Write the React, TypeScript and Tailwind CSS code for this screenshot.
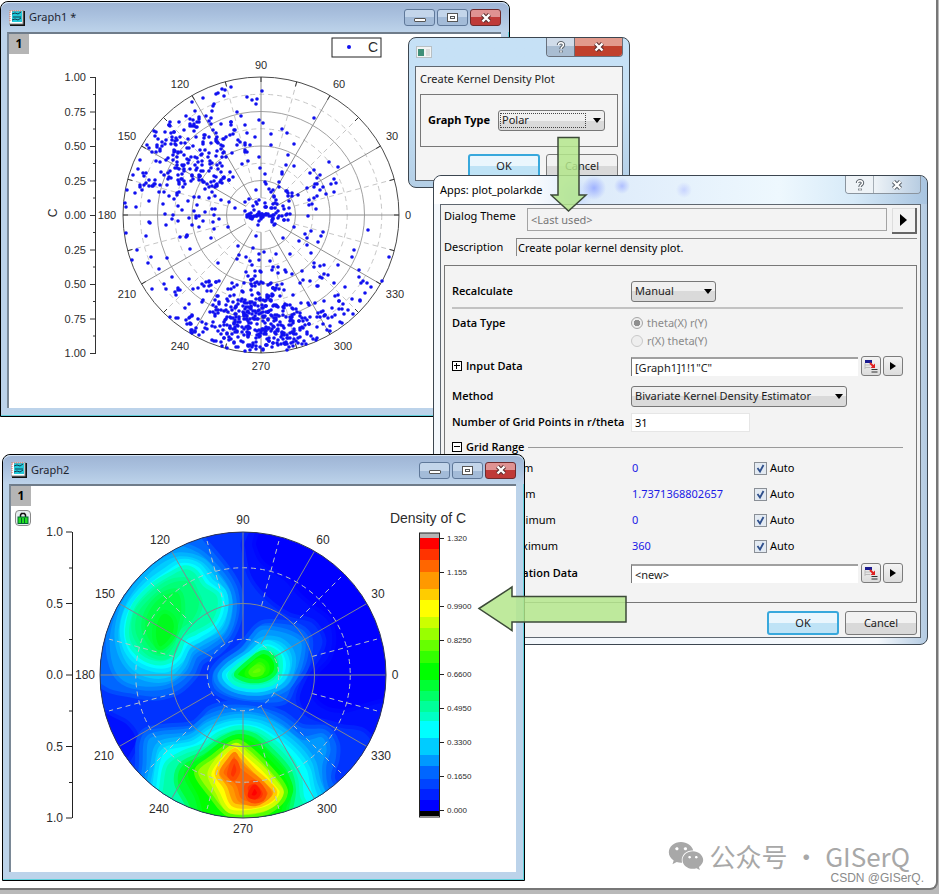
import { useId, type ReactNode } from "react";
import { FaWeixin } from "react-icons/fa";

type Pt = [number, number];
type Contour = { fill: string; edge: string; pts: number[] };

const ARIAL = '"Liberation Sans", Arial, sans-serif';

// closed smooth curve through a flat list of x, y values
function smoothPath(flat: number[]) {
  const p: Pt[] = [];
  for (let i = 0; i < flat.length; i += 2) p.push([flat[i], flat[i + 1]]);
  const n = p.length;
  let d = `M${p[0][0]} ${p[0][1]}`;
  for (let i = 0; i < n; i++) {
    const a = p[(i - 1 + n) % n];
    const b = p[i];
    const c = p[(i + 1) % n];
    const e = p[(i + 2) % n];
    d += `C${b[0] + (c[0] - a[0]) / 6} ${b[1] + (c[1] - a[1]) / 6} ${c[0] - (e[0] - b[0]) / 6} ${c[1] - (e[1] - b[1]) / 6} ${c[0]} ${c[1]}`;
  }
  return d + "Z";
}

function polar(cx: number, cy: number, r: number, deg: number): Pt {
  const a = (deg * Math.PI) / 180;
  return [cx + r * Math.cos(a), cy - r * Math.sin(a)];
}

// contours live in a space three times the size of the plot, lowest level first
const contours: Contour[] = [
  { fill: "#0010ff", edge: "#0008ff", pts: [442, -40, 475, 60, 500, 110, 570, 160, 610, 205, 650, 240, 700, 280, 715, 340, 700, 400, 665, 440, 650, 500, 680, 540, 740, 555, 920, 550, 900, 940, -40, 940, -40, -40] },
  { fill: "#0033ff", edge: "#0022ff", pts: [420, -40, 440, 60, 460, 150, 510, 215, 580, 265, 650, 285, 685, 340, 670, 390, 630, 450, 605, 520, 640, 570, 730, 598, 830, 640, 920, 900, -40, 940, 50, 780, 105, 690, 125, 640, 95, 590, 40, 560, -40, 500, -60, -60] },
  { fill: "#0066ff", edge: "#004cff", pts: [250, -40, 330, 45, 400, 130, 432, 190, 436, 260, 412, 330, 370, 380, 320, 410, 300, 450, 250, 498, 180, 518, 100, 508, 30, 490, -30, 430, -60, 300, -60, -60] },
  { fill: "#0066ff", edge: "#004cff", pts: [480, 300, 520, 285, 600, 295, 640, 325, 645, 370, 630, 430, 595, 480, 565, 530, 480, 535, 400, 520, 350, 490, 345, 440, 375, 400, 430, 360] },
  { fill: "#0066ff", edge: "#004cff", pts: [80, 920, 120, 740, 125, 650, 150, 610, 220, 598, 290, 590, 340, 545, 400, 530, 480, 535, 560, 560, 620, 600, 690, 605, 725, 650, 725, 700, 712, 760, 760, 830, 780, 940] },
  { fill: "#0099ff", edge: "#0080ff", pts: [225, 50, 310, 75, 370, 132, 408, 190, 416, 255, 393, 325, 340, 368, 300, 390, 275, 440, 220, 480, 150, 488, 80, 470, 45, 420, 36, 330, 60, 240, 105, 150, 165, 85] },
  { fill: "#0099ff", edge: "#0080ff", pts: [500, 305, 570, 315, 620, 345, 618, 400, 600, 450, 570, 490, 500, 515, 430, 510, 375, 485, 358, 445, 390, 405, 440, 370, 470, 330] },
  { fill: "#0099ff", edge: "#0080ff", pts: [110, 930, 132, 800, 145, 720, 152, 640, 200, 620, 280, 612, 330, 575, 400, 553, 490, 556, 560, 590, 620, 636, 680, 628, 698, 670, 685, 720, 690, 780, 730, 860, 760, 940] },
  { fill: "#00ccff", edge: "#00b3ff", pts: [250, 85, 320, 102, 365, 152, 398, 200, 402, 255, 380, 315, 320, 352, 285, 375, 264, 420, 225, 458, 160, 462, 105, 435, 70, 380, 62, 310, 85, 230, 130, 165, 190, 110] },
  { fill: "#00ccff", edge: "#00b3ff", pts: [510, 335, 560, 345, 592, 385, 588, 440, 560, 480, 500, 502, 430, 498, 385, 475, 372, 445, 400, 412, 450, 380, 480, 350] },
  { fill: "#00ccff", edge: "#00b3ff", pts: [130, 930, 152, 800, 168, 720, 190, 652, 280, 632, 340, 592, 420, 570, 500, 578, 560, 610, 620, 660, 655, 710, 670, 770, 710, 860, 740, 940] },
  { fill: "#00ffff", edge: "#00e6ff", pts: [255, 105, 310, 118, 345, 163, 385, 197, 390, 250, 365, 305, 315, 340, 280, 360, 255, 405, 215, 432, 165, 430, 115, 405, 85, 360, 78, 300, 100, 235, 150, 175, 210, 130] },
  { fill: "#00ffff", edge: "#00e6ff", pts: [515, 348, 555, 368, 575, 405, 570, 445, 545, 475, 490, 493, 430, 488, 395, 468, 385, 442, 415, 415, 465, 380, 490, 358] },
  { fill: "#00ffff", edge: "#00e6ff", pts: [150, 930, 172, 800, 186, 710, 210, 668, 290, 650, 350, 610, 420, 589, 490, 597, 550, 632, 605, 680, 638, 730, 652, 790, 680, 860, 710, 940] },
  { fill: "#00ffaa", edge: "#00ffcc", pts: [265, 124, 300, 137, 325, 175, 366, 205, 370, 245, 350, 290, 300, 320, 265, 340, 245, 385, 210, 410, 165, 408, 125, 385, 97, 345, 95, 295, 115, 235, 165, 180, 220, 145] },
  { fill: "#00ffaa", edge: "#00ffcc", pts: [510, 366, 548, 385, 555, 420, 547, 455, 520, 476, 470, 483, 420, 473, 400, 447, 425, 420, 470, 390] },
  { fill: "#00ffaa", edge: "#00ffcc", pts: [180, 930, 195, 790, 210, 715, 260, 680, 320, 658, 370, 622, 430, 604, 490, 615, 545, 655, 590, 705, 612, 755, 618, 810, 640, 930] },
  { fill: "#00ff77", edge: "#00ff90", pts: [235, 162, 280, 162, 303, 200, 315, 235, 294, 285, 255, 318, 240, 362, 210, 394, 170, 390, 132, 357, 112, 310, 122, 255, 162, 208, 200, 178] },
  { fill: "#00ff44", edge: "#00ff5c", pts: [205, 202, 250, 197, 262, 250, 250, 305, 225, 350, 190, 378, 152, 340, 142, 290, 162, 240] },
  { fill: "#00ff33", edge: "#00ff66", pts: [240, 770, 255, 715, 320, 680, 380, 636, 430, 618, 480, 630, 530, 675, 578, 730, 594, 790, 585, 850, 570, 930, 330, 930, 270, 830] },
  { fill: "#00fb1e", edge: "#00ff33", pts: [205, 257, 233, 275, 238, 315, 215, 353, 188, 366, 174, 330, 182, 280] },
  { fill: "#00ff00", edge: "#00ff44", pts: [505, 378, 532, 395, 540, 430, 520, 455, 475, 466, 430, 455, 422, 440, 460, 405, 485, 385] },
  { fill: "#00ff00", edge: "#00ff18", pts: [270, 740, 330, 692, 385, 647, 430, 630, 475, 645, 520, 690, 568, 745, 586, 790, 568, 835, 530, 900, 350, 910, 300, 810] },
  { fill: "#33ff00", edge: "#18ff00", pts: [490, 402, 512, 415, 512, 440, 480, 454, 452, 445, 465, 420] },
  { fill: "#66ff00", edge: "#4cff00", pts: [485, 421, 499, 428, 495, 442, 472, 447, 464, 436] },
  { fill: "#99ff00", edge: "#55ff00", pts: [300, 738, 350, 692, 395, 658, 427, 646, 465, 670, 512, 715, 555, 765, 570, 800, 545, 840, 490, 868, 400, 868, 345, 810] },
  { fill: "#ffff00", edge: "#ccff00", pts: [340, 745, 365, 700, 400, 667, 423, 657, 452, 685, 500, 727, 542, 775, 557, 800, 533, 835, 480, 855, 400, 855, 365, 800] },
  { fill: "#ff9900", edge: "#ffcc00", pts: [362, 742, 390, 695, 417, 672, 435, 690, 472, 730, 518, 772, 538, 800, 515, 828, 465, 842, 410, 835, 388, 785] },
  { fill: "#ff6600", edge: "#ff8000", pts: [377, 742, 400, 702, 417, 684, 434, 718, 480, 755, 512, 785, 520, 808, 480, 834, 432, 822, 415, 780] },
  { fill: "#ff3300", edge: "#ff4c00", pts: [414, 704, 427, 732, 414, 758, 399, 745] },
  { fill: "#ff3300", edge: "#ff4c00", pts: [450, 782, 480, 768, 506, 800, 494, 823, 462, 822] },
  { fill: "#ff0000", edge: "#ff1800", pts: [475, 782, 489, 800, 478, 814, 461, 808] },
];

const spokes = [0, 30, 60, 90, 120, 150, 180, 210, 240, 270, 300, 330];

function makePoints(cx: number, cy: number, radius: number) {
  let seed = 20231;
  const rnd = () => {
    seed = (seed * 1664525 + 1013904223) % 4294967296;
    return seed / 4294967296;
  };
  const gauss = () => Math.sqrt(-2 * Math.log(rnd() + 1e-9)) * Math.cos(2 * Math.PI * rnd());
  // offset from the pole, spread, count
  const clusters = [
    [-74, -60, 30, 30, 170],
    [-84, -24, 34, 24, 80],
    [-44, -76, 30, 26, 60],
    [2, 108, 42, 26, 250],
    [0, 96, 13, 28, 110],
    [38, 112, 32, 20, 80],
    [-45, 108, 28, 22, 70],
    [-4, 0, 7, 2, 32],
    [16, -6, 9, 11, 45],
    [36, -26, 22, 18, 36],
    [75, 75, 24, 16, 14],
    [-70, 40, 36, 22, 26],
    [40, 25, 28, 20, 20],
  ];
  const out: Pt[] = [];
  for (const [dx, dy, sx, sy, count] of clusters) {
    let left = count;
    while (left > 0) {
      const x = dx + gauss() * sx;
      const y = dy + gauss() * sy;
      if (Math.hypot(x, y) < radius) {
        out.push([Math.round(cx + x), Math.round(cy + y)]);
        left--;
      }
    }
  }
  return out;
}

const scatter: Pt[] = [
  ...makePoints(261, 215, 137),
  [262, 91], [314, 118], [287, 133], [294, 144], [263, 123], [329, 162], [271, 145], [231, 87], [222, 89], [216, 94],
  [203, 98], [368, 230], [389, 257], [352, 257], [382, 281], [363, 281], [371, 287], [132, 260], [137, 250], [311, 253],
];

function AxisLabel({ x, y, size = 12, children, anchor = "middle" }: { x: number; y: number; size?: number; children: ReactNode; anchor?: "start" | "middle" | "end" }) {
  return (
    <text x={x} y={y} fontSize={size} textAnchor={anchor} fontFamily={ARIAL} fill="#2c2c2c">
      {children}
    </text>
  );
}

function ScatterChart() {
  const cx = 261;
  const cy = 215;
  const R = 138;
  return (
    <svg className="block h-[373px] w-full" viewBox="9 34 492 373" preserveAspectRatio="xMinYMin meet">
      <rect x="332" y="38" width="49" height="19" fill="#fff" stroke="#222" />
      <circle cx="349" cy="47" r="2" fill="#1010f0" />
      <AxisLabel x={373} y={52} size={14}>C</AxisLabel>
      <g fill="none" stroke="#c6c6c6" strokeDasharray="5 4">
        {[0.125, 0.375, 0.625, 0.875].map((f) => (
          <circle key={f} cx={cx} cy={cy} r={R * f} />
        ))}
        {spokes.map((s) => {
          const [x1, y1] = polar(cx, cy, R * 0.25, s + 15);
          const [x2, y2] = polar(cx, cy, R, s + 15);
          return <line key={s} x1={x1} y1={y1} x2={x2} y2={y2} />;
        })}
      </g>
      <g fill="none" stroke="#8e8e8e">
        {[0.25, 0.5, 0.75].map((f) => (
          <circle key={f} cx={cx} cy={cy} r={R * f} stroke="#a0a0a0" />
        ))}
        {spokes.map((s) => {
          const [x1, y1] = polar(cx, cy, R * 0.125, s);
          const [x2, y2] = polar(cx, cy, R, s);
          return <line key={s} x1={x1} y1={y1} x2={x2} y2={y2} />;
        })}
        <circle cx={cx} cy={cy} r={R} stroke="#4a4a4a" />
      </g>
      <g stroke="#333">
        {[...spokes, ...spokes.map((s) => s + 15)].map((s) => {
          const [x1, y1] = polar(cx, cy, R - 5, s);
          const [x2, y2] = polar(cx, cy, R, s);
          return <line key={s} x1={x1} y1={y1} x2={x2} y2={y2} />;
        })}
      </g>
      <g fill="#1010f0">
        {scatter.map(([x, y], i) => (
          <circle key={i} cx={x} cy={y} r="1.8" />
        ))}
      </g>
      <path d="M95.5 77V354" stroke="#333" />
      {["1.00", "0.75", "0.50", "0.25", "0.00", "0.25", "0.50", "0.75", "1.00"].map((t, i) => (
        <g key={i}>
          <path d={`M90 ${77.5 + i * 34.5}h5`} stroke="#333" />
          {i < 8 && <path d={`M93 ${94.5 + i * 34.5}h2`} stroke="#333" />}
          <AxisLabel x={86} y={81 + i * 34.5} size={11} anchor="end">{t}</AxisLabel>
        </g>
      ))}
      <text x="57" y="213" fontSize="12" fontFamily={ARIAL} fill="#2c2c2c" textAnchor="middle" transform="rotate(-90 57 213)">C</text>
      <g>
        <AxisLabel x={261} y={69} size={11}>90</AxisLabel>
        <AxisLabel x={180} y={88} size={11}>120</AxisLabel>
        <AxisLabel x={339} y={88} size={11}>60</AxisLabel>
        <AxisLabel x={127} y={140} size={11}>150</AxisLabel>
        <AxisLabel x={392} y={140} size={11}>30</AxisLabel>
        <AxisLabel x={107} y={219} size={11}>180</AxisLabel>
        <AxisLabel x={408} y={219} size={11}>0</AxisLabel>
        <AxisLabel x={127} y={298} size={11}>210</AxisLabel>
        <AxisLabel x={395} y={298} size={11}>330</AxisLabel>
        <AxisLabel x={180} y={350} size={11}>240</AxisLabel>
        <AxisLabel x={343} y={350} size={11}>300</AxisLabel>
        <AxisLabel x={261} y={370} size={11}>270</AxisLabel>
      </g>
    </svg>
  );
}

// colour key bands, top to bottom: colour and height
const bands: [string, number][] = [
  ["#ff0000", 11], ["#ff3300", 11], ["#ff6600", 12], ["#ff9900", 17], ["#ffcc00", 11], ["#ffff00", 17],
  ["#ccff00", 11], ["#99ff00", 12], ["#66ff00", 11], ["#33ff00", 12], ["#00ff00", 17], ["#00ff33", 11],
  ["#00ff66", 10], ["#00ff99", 11], ["#00ffc4", 9], ["#00ffff", 17], ["#00ccff", 17], ["#0099ff", 11],
  ["#0066ff", 13], ["#0044ff", 10], ["#0022ff", 11], ["#0000ff", 11],
];

function ColorKey() {
  let y = 538;
  return (
    <g>
      <rect x="420" y="533" width="20" height="6" fill="#b4b4b4" />
      {bands.map(([c, h]) => {
        const top = y;
        y += h;
        return <rect key={c} x="420" y={top} width="20" height={h} fill={c} shapeRendering="crispEdges" />;
      })}
      <rect x="420" y="811" width="20" height="5" fill="#000" />
      <rect x="419.5" y="533" width="20" height="284" fill="none" stroke="#222" />
      {["1.320", "1.155", "0.9900", "0.8250", "0.6600", "0.4950", "0.3300", "0.1650", "0.000"].map((t, i) => (
        <g key={t}>
          <path d={`M440 ${538.5 + i * 34}h4`} stroke="#222" />
          <AxisLabel x={447} y={541 + i * 34} size={8} anchor="start">{t}</AxisLabel>
        </g>
      ))}
    </g>
  );
}

function DensityChart() {
  const clip = useId();
  const cx = 243;
  const cy = 675;
  const R = 143;
  return (
    <svg className="block h-[386px] w-full" viewBox="11 486 505 386" preserveAspectRatio="xMinYMin meet">
      <defs>
        <clipPath id={clip}>
          <circle cx={cx} cy={cy} r={R} />
        </clipPath>
      </defs>
      <g clipPath={`url(#${clip})`}>
        <rect x="100" y="531" width="288" height="288" fill="#0000ff" />
        <g transform="translate(96 526) scale(0.3333)">
          {contours.map((c, i) => (
            <path key={i} d={smoothPath(c.pts)} fill={c.fill} stroke={c.edge} strokeWidth={12} />
          ))}
        </g>
      </g>
      <g fill="none" stroke="#b9c3c9" strokeDasharray="5 4">
        {[0.25, 0.75].map((f) => (
          <circle key={f} cx={cx} cy={cy} r={R * f} />
        ))}
        {spokes.map((s) => {
          const [x1, y1] = polar(cx, cy, R * 0.5, s + 15);
          const [x2, y2] = polar(cx, cy, R * 0.97, s + 15);
          return <line key={s} x1={x1} y1={y1} x2={x2} y2={y2} />;
        })}
      </g>
      <g fill="none" stroke="#808890">
        <circle cx={cx} cy={cy} r={R * 0.5} />
        {spokes.map((s) => {
          const [x1, y1] = polar(cx, cy, R * 0.25, s);
          const [x2, y2] = polar(cx, cy, R, s);
          return <line key={s} x1={x1} y1={y1} x2={x2} y2={y2} />;
        })}
        <circle cx={cx} cy={cy} r={R} stroke="#303850" />
      </g>
      <path d="M72.5 532V818" stroke="#222" />
      {["1.0", "0.5", "0.0", "0.5", "1.0"].map((t, i) => (
        <g key={i}>
          <path d={`M66 ${532 + i * 71.5}h6`} stroke="#222" />
          {i < 4 && <path d={`M69 ${568 + i * 71.5}h3`} stroke="#222" />}
          <AxisLabel x={63} y={536 + i * 71.5} anchor="end">{t}</AxisLabel>
        </g>
      ))}
      <AxisLabel x={243} y={524}>90</AxisLabel>
      <AxisLabel x={160} y={544}>120</AxisLabel>
      <AxisLabel x={323} y={544}>60</AxisLabel>
      <AxisLabel x={105} y={598}>150</AxisLabel>
      <AxisLabel x={378} y={598}>30</AxisLabel>
      <AxisLabel x={85} y={679}>180</AxisLabel>
      <AxisLabel x={395} y={679}>0</AxisLabel>
      <AxisLabel x={104} y={760}>210</AxisLabel>
      <AxisLabel x={381} y={760}>330</AxisLabel>
      <AxisLabel x={159} y={813}>240</AxisLabel>
      <AxisLabel x={327} y={813}>300</AxisLabel>
      <AxisLabel x={243} y={833}>270</AxisLabel>
      <AxisLabel x={428} y={523} size={14}>Density of C</AxisLabel>
      <ColorKey />
    </svg>
  );
}

function GraphIcon() {
  return (
    <svg className="h-4 w-4" viewBox="0 0 16 16" aria-hidden="true">
      <rect x="1" y="1" width="15" height="15" fill="#111" />
      <rect x="0" y="0" width="14" height="14" fill="#fff" stroke="#888" />
      <rect x="3" y="1" width="10" height="11" fill="#22c8d8" />
      <path d="M3 4l3-1 3 1 3-2M3 10l3-1 3 1 3-2M4 7h8" stroke="#123c50" fill="none" />
      <path d="M1 1h12M1 2v10" stroke="#d66" strokeDasharray="1 1" />
    </svg>
  );
}

function CloseGlyph({ gray = false }: { gray?: boolean }) {
  return (
    <svg className="h-3 w-3" viewBox="0 0 12 12" aria-hidden="true">
      <path d="M2.5 2.5l7 7M9.5 2.5l-7 7" stroke={gray ? "#5c646c" : "#5a3030"} strokeWidth="4.4" />
      <path d="M2.5 2.5l7 7M9.5 2.5l-7 7" stroke="#fff" strokeWidth="2.4" />
    </svg>
  );
}

function HelpGlyph() {
  return (
    <svg className="h-3 w-3" viewBox="0 0 12 12" fill="none" aria-hidden="true">
      <path d="M3.5 4c0-3 5-3 5 0 0 2-2.5 1.5-2.5 4M6 9.5v2" stroke="#5c646c" strokeWidth="3.4" />
      <path d="M3.5 4c0-3 5-3 5 0 0 2-2.5 1.5-2.5 4M6 9.5v2" stroke="#fff" strokeWidth="1.4" />
    </svg>
  );
}

function GraphWindow({ title, className, children, locked }: { title: string; className: string; children: ReactNode; locked?: boolean }) {
  const btn = "flex h-[17px] w-[31px] items-center justify-center rounded-[3px] border border-[#5f7899] bg-linear-to-b from-[#c3d5ea] from-50% to-[#a3bbd8] to-50%";
  return (
    <section className={`absolute flex flex-col rounded-t-lg border border-black bg-[#bcd3ea] pr-2 pb-2 pl-1.5 shadow-[inset_-1px_-1px_0_#5fd0dc] ${className}`}>
      <header className="-mr-2 -ml-1.5 flex h-[30px] items-center gap-1 rounded-t-lg border-t border-[#d5e4f4] bg-linear-to-b from-[#9fb5d5] via-[#a9c0de] via-40% to-[#bdd3ea] pr-2 pl-2">
        <GraphIcon />
        <h2 className="flex-1 text-[11px] text-[#1d2530]">{title}</h2>
        <div className="flex gap-0.5">
          <button className={btn} aria-label="Minimize">
            <span className="mt-1 h-1 w-3 rounded-[1px] border border-[#555] bg-white" />
          </button>
          <button className={btn} aria-label="Maximize">
            <span className="flex h-[9px] w-[11px] items-center justify-center border border-[#555] bg-white">
              <span className="h-[3px] w-[5px] border border-[#555]" />
            </span>
          </button>
          <button className="flex h-[17px] w-[31px] items-center justify-center rounded-[3px] border border-[#6f2a2c] bg-linear-to-b from-[#df9292] from-45% to-[#bf3a38] to-45%" aria-label="Close">
            <CloseGlyph />
          </button>
        </div>
      </header>
      <div className="relative flex-1 border-t-2 border-l-2 border-t-[#6f7c8a] border-l-[#7a8896] bg-white">
        {children}
        <span className="absolute top-0 left-0 flex h-5 w-5 items-center justify-center bg-[#b5b5b5] text-xs font-bold text-black">1</span>
        {locked && (
          <span className="absolute top-6 left-1 flex h-4 w-4 items-center justify-center rounded border border-[#888] bg-[#e6eef0]">
            <svg className="h-3 w-3" viewBox="0 0 12 12" aria-label="Locked">
              <path d="M3.5 5V3l1-1.5h3l1 1.5v2" fill="none" stroke="#111" strokeWidth="1.5" />
              <rect x="1" y="5" width="10" height="6.5" fill="#22dd22" stroke="#063" />
              <path d="M4.5 6v5M7.5 6v5" stroke="#063" />
            </svg>
          </span>
        )}
      </div>
    </section>
  );
}

function PushButton({ primary = false, children }: { primary?: boolean; children: ReactNode }) {
  return (
    <button
      className={`h-6 w-[72px] rounded-[3px] text-[11px] text-[#1c1c1c] ${
        primary
          ? "border-2 border-[#38a8dc] bg-linear-to-b from-[#eaf6fd] from-50% to-[#bfe3f6] to-50%"
          : "border border-[#7a7a7a] bg-linear-to-b from-[#f2f2f2] from-50% to-[#d9d9d9] to-50%"
      }`}
    >
      {children}
    </button>
  );
}

function DropDown({ id, value, className, focused }: { id: string; value: string; className: string; focused?: boolean }) {
  return (
    <div className={`relative h-[21px] ${className}`}>
      <select id={id} className="block h-full w-full appearance-none rounded-[3px] border border-[#777] bg-linear-to-b from-[#f0f0f0] from-50% to-[#dadada] to-50% pl-[3px] text-[11px] text-[#1c1c1c]">
        <option>{value}</option>
      </select>
      {focused && <span className="pointer-events-none absolute inset-y-[3px] right-[19px] left-[2px] border border-dotted border-[#444]" />}
      <svg className="pointer-events-none absolute top-2 right-1 h-[5px] w-2" viewBox="0 0 8 5" aria-hidden="true">
        <path d="M0 0h8L4 5z" fill="#000" />
      </svg>
    </div>
  );
}

function PlayGlyph({ big = false }: { big?: boolean }) {
  return (
    <svg className={big ? "h-3 w-[7px]" : "h-2 w-[6px]"} viewBox="0 0 6 10" preserveAspectRatio="none" aria-hidden="true">
      <path d="M0 0l6 5-6 5z" fill="#000" />
    </svg>
  );
}

function DataField({ id, value }: { id: string; value: string }) {
  const btn = "flex h-5 w-5 items-center justify-center rounded-[3px] border border-[#7c7c7c] bg-linear-to-b from-[#f4f4f4] to-[#dcdcdc]";
  return (
    <div className="flex flex-1 items-center gap-0.5">
      <input id={id} defaultValue={value} className="mr-px h-[19px] min-w-0 flex-1 border-t-2 border-l border-t-[#a0a0a0] border-l-[#777] bg-white px-[3px] text-[11px] text-[#222]" />
      <button className={btn} aria-label="Select data">
        <svg className="h-[14px] w-[14px]" viewBox="0 0 14 14" aria-hidden="true">
          <path d="M1 1h7v3H1z" fill="#1a1a90" />
          <path d="M1 6h5M1 8.5h5M1 4v6" stroke="#bbb" fill="none" />
          <path d="M6 4l4 4" stroke="#e02020" strokeWidth="2" />
          <path d="M11 4.500V9H6.500z" fill="#e02020" />
          <path d="M7.500 10.500h6M7.500 13h6" stroke="#333" strokeWidth="1.200" />
        </svg>
      </button>
      <button className={btn} aria-label="More options">
        <PlayGlyph />
      </button>
    </div>
  );
}

function TreeToggle({ open = false }: { open?: boolean }) {
  return (
    <button className="relative mr-1 h-[10px] w-[10px] shrink-0 border border-black bg-white" aria-label={open ? "Collapse" : "Expand"}>
      <span className="absolute top-[3px] left-[1px] h-px w-[6px] bg-black" />
      {!open && <span className="absolute top-[1px] left-[3px] h-[6px] w-px bg-black" />}
    </button>
  );
}

function RangeRow({ id, label, value }: { id: string; label: string; value: string }) {
  return (
    <div className="flex h-[26px] items-center">
      <span className="w-[180px] pl-6 text-[11px]">{label}</span>
      <span className="w-[122px] text-[11px] text-[#1a1ae6]">{value}</span>
      <span className="relative h-[13px] w-[13px]">
        <input type="checkbox" id={id} defaultChecked className="block h-[13px] w-[13px] appearance-none border border-[#8a8f96] bg-[#e3eaf2]" />
        <svg className="pointer-events-none absolute inset-0 h-[13px] w-[13px]" viewBox="0 0 13 13" fill="none" aria-hidden="true">
          <path d="M3.5 6l2.5 3.5L9.5 3" stroke="#2f4f8c" strokeWidth="1.8" />
        </svg>
      </span>
      <label htmlFor={id} className="pl-[3px] text-[11px]">Auto</label>
    </div>
  );
}

const labelCol = "flex w-[179px] shrink-0 items-center font-['Open_Sans','Noto_Sans',sans-serif] text-[11px] font-semibold whitespace-nowrap";

function KernelDialog() {
  return (
    <section className="absolute top-[37px] left-[408px] flex h-[151px] w-[222px] flex-col rounded-lg border border-[#3c4650] bg-linear-to-b from-[#c6e1f6] from-40% to-[#b4cfe6] px-1.5 pb-1.5">
      <header className="flex h-7 items-start justify-between">
        <svg className="mt-2 ml-px h-3 w-4" viewBox="0 0 16 12" aria-hidden="true">
          <rect x="0.5" y="0.5" width="15" height="11" fill="#f2f4f4" stroke="#b8c0c4" />
          <rect x="2" y="3" width="6" height="7" fill="#3f8f78" />
          <rect x="10" y="3" width="4" height="7" fill="#ddd" />
        </svg>
        <div className="flex h-[19px] overflow-hidden rounded-b border border-t-0 border-[#68707c]">
          <button className="flex w-7 items-center justify-center border-r border-[#68707c] bg-linear-to-b from-[#d0dcea] from-45% to-[#a9bdd2] to-45%" aria-label="Help">
            <HelpGlyph />
          </button>
          <button className="flex w-[47px] items-center justify-center bg-linear-to-b from-[#e29a8c] from-45% to-[#c0402c] to-45%" aria-label="Close">
            <CloseGlyph />
          </button>
        </div>
      </header>
      <div className="flex flex-1 flex-col border border-[#5f6770] bg-[#f4f4f4] px-1 pt-1">
        <p className="text-[11px] leading-4 text-[#222]">Create Kernel Density Plot</p>
        <div className="mt-[7px] flex h-[53px] items-center border border-[#777] pl-[7px]">
          <label htmlFor="graph-type" className="w-[70px] text-[11px] font-bold text-black">Graph Type</label>
          <DropDown id="graph-type" value="Polar" className="w-[107px]" focused />
        </div>
        <div className="mt-[7px] flex justify-end gap-1.5">
          <PushButton primary>OK</PushButton>
          <PushButton>Cancel</PushButton>
        </div>
      </div>
    </section>
  );
}

function PolarKdeDialog() {
  return (
    <section className="absolute top-[175px] left-[433px] flex w-[495px] flex-col rounded-lg border border-[#3c4650] bg-linear-to-r from-[#f4f8fc] from-90% to-[#b4cbe2] px-1.5 pb-1.5 text-black">
      <header className="-mx-1.5 flex h-7 items-start justify-between rounded-t-lg bg-[radial-gradient(circle_at_160px_12px,#9fb2ff_0,transparent_12px),radial-gradient(circle_at_188px_10px,#b0c0ff_0,transparent_8px),radial-gradient(circle_at_250px_14px,#c8d4ff_0,transparent_8px),radial-gradient(circle_at_140px_20px,#c4d8ff_0,transparent_18px),linear-gradient(to_right,#fff_0%,#fff_18%,#dceafa_30%,#eef8fe_70%,#d7eaf8_85%,#a8c4e0_100%)] pr-1.5 pl-1.5">
        <h2 className="pt-1.5 text-[11px] leading-4">Apps: plot_polarkde</h2>
        <div className="flex h-[18px] overflow-hidden rounded-b border border-t-0 border-[#8a949e]">
          <button className="flex w-7 items-center justify-center border-r border-[#a5aeb6] bg-[#eef3f7]" aria-label="Help">
            <HelpGlyph />
          </button>
          <button className="flex w-[46px] items-center justify-center bg-linear-to-r from-[#eef3f7] to-[#b8cde2]" aria-label="Close">
            <CloseGlyph gray />
          </button>
        </div>
      </header>
      <div className="border border-[#5f6770] bg-[#f3f3f3] px-[3px] pt-[3px] pb-0.5">
        <div className="flex items-start">
          <label htmlFor="theme" className="w-[83px] text-[11px] leading-4">Dialog Theme</label>
          <input id="theme" defaultValue="<Last used>" className="h-[23px] min-w-0 flex-1 border border-[#a3a3a3] bg-[#f3f3f3] px-[3px] text-[11px] text-[#777]" />
          <button className="ml-[5px] flex h-[26px] w-[25px] items-center justify-center border-r-2 border-b-2 border-[#666] bg-[#f3f3f3] shadow-[inset_1px_1px_0_#ddd]" aria-label="Theme menu">
            <PlayGlyph big />
          </button>
        </div>
        <div className="mt-1 flex h-[18px] items-center">
          <label htmlFor="description" className="w-[72px] text-[11px]">Description</label>
          <input id="description" readOnly defaultValue="Create polar kernel density plot." className="h-[18px] min-w-0 flex-1 border-t border-l border-[#888] bg-[#f3f3f3] pl-px text-[11px]" />
        </div>
        <div className="mt-[9px] border border-[#777] px-[7px] pt-[9px] pb-[17px]">
          <div className="mr-1.5 flex h-[34px] items-center border-b-2 border-[#c2c2c2]">
            <label htmlFor="recalculate" className={labelCol}>Recalculate</label>
            <DropDown id="recalculate" value="Manual" className="w-[85px]" />
          </div>
          <div role="radiogroup" aria-labelledby="data-type-label" className="flex pt-[5px]">
            <span id="data-type-label" className={`${labelCol} h-[18px]`}>Data Type</span>
            <div className="text-[11px] text-[#8a8a8a]">
              <div className="flex h-[18px] items-center gap-1">
                <input type="radio" id="theta-first" name="data-type" defaultChecked disabled className="h-3 w-3 appearance-none rounded-full border border-[#a5a5a5] bg-[radial-gradient(circle,#8f8f8f_0,#8f8f8f_3px,#eee_3px)]" />
                <label htmlFor="theta-first">theta(X) r(Y)</label>
              </div>
              <div className="flex h-[18px] items-center gap-1">
                <input type="radio" id="r-first" name="data-type" disabled className="h-3 w-3 appearance-none rounded-full border border-[#c9c9c9] bg-[#eee]" />
                <label htmlFor="r-first">r(X) theta(Y)</label>
              </div>
            </div>
          </div>
          <div className="mt-1 mr-1.5 flex h-6 items-center">
            <div className={labelCol}>
              <TreeToggle />
              <label htmlFor="input-data">Input Data</label>
            </div>
            <DataField id="input-data" value={'[Graph1]1!1"C"'} />
          </div>
          <div className="mt-1.5 flex h-6 items-center">
            <label htmlFor="method" className={labelCol}>Method</label>
            <DropDown id="method" value="Bivariate Kernel Density Estimator" className="w-[216px]" />
          </div>
          <div className="mt-1 flex h-[21px] items-center">
            <label htmlFor="grid-points" className={labelCol}>Number of Grid Points in r/theta</label>
            <input id="grid-points" defaultValue="31" className="h-[19px] w-[119px] border border-[#e6e6e6] bg-white px-[3px] text-[11px]" />
          </div>
          <div className="mt-1.5 mr-1.5 flex h-4 items-center">
            <TreeToggle open />
            <span className="font-['Open_Sans','Noto_Sans',sans-serif] text-[11px] font-semibold">Grid Range</span>
            <span className="ml-1 h-px flex-1 bg-[#999]" />
          </div>
          <RangeRow id="auto-rmin" label="r Minimum" value="0" />
          <RangeRow id="auto-rmax" label="r Maximum" value="1.7371368802657" />
          <RangeRow id="auto-tmin" label="theta Minimum" value="0" />
          <RangeRow id="auto-tmax" label="theta Maximum" value="360" />
          <div className="mt-0.5 mr-1.5 flex h-6 items-center">
            <label htmlFor="calc-data" className={`${labelCol} pl-7`}>Computation Data</label>
            <DataField id="calc-data" value="<new>" />
          </div>
        </div>
        <div className="mt-2 flex justify-end gap-1.5">
          <PushButton primary>OK</PushButton>
          <PushButton>Cancel</PushButton>
        </div>
      </div>
    </section>
  );
}

export default function App() {
  return (
    <div className="flex min-h-screen flex-col overflow-hidden bg-[#b9b9b9] font-['Noto_Sans','Open_Sans',sans-serif]">
      <main className="relative mr-px mb-1 flex-1 rounded-br-lg border-r-2 border-b-2 border-[#777] bg-white">
        <GraphWindow title="Graph1 *" className="top-px left-0 h-[416px] w-[510px]">
          <ScatterChart />
        </GraphWindow>
        <KernelDialog />
        <PolarKdeDialog />
        <GraphWindow title="Graph2" className="top-[454px] left-0.5 h-[427px] w-[523px]" locked>
          <DensityChart />
        </GraphWindow>

        {/* callout arrows */}
        <svg className="pointer-events-none absolute top-[136px] left-[550px] h-[77px] w-[38px]" viewBox="550 136 38 77" aria-hidden="true">
          <path d="M558 137.5h21V195h7l-17.5 16L551 195h7z" fill="#b4e68c" fillOpacity="0.85" stroke="#3c4a38" strokeWidth="1.5" />
        </svg>
        <svg className="pointer-events-none absolute top-[585px] left-[477px] h-[48px] w-[151px]" viewBox="477 585 151 48" aria-hidden="true">
          <path d="M479 608.5L512 587v9.5h114V622H512v8.5z" fill="#b4e68c" fillOpacity="0.85" stroke="#3c4a38" strokeWidth="1.5" />
        </svg>

        {/* watermark */}
        <div className="absolute right-3 bottom-0.5 flex flex-col items-end text-[#a8a8a8]">
          <p className="mr-3.5 flex h-7 items-center gap-1.5 font-['Noto_Sans_CJK_SC',sans-serif] text-[26px] leading-7">
            <FaWeixin className="h-9 w-9" />
            <span>公众号 · GISerQ</span>
          </p>
          <p className="font-['Liberation_Sans',sans-serif] text-[12px] leading-4 text-[#8a8a8a]">CSDN @GISerQ.</p>
        </div>
      </main>
    </div>
  );
}
